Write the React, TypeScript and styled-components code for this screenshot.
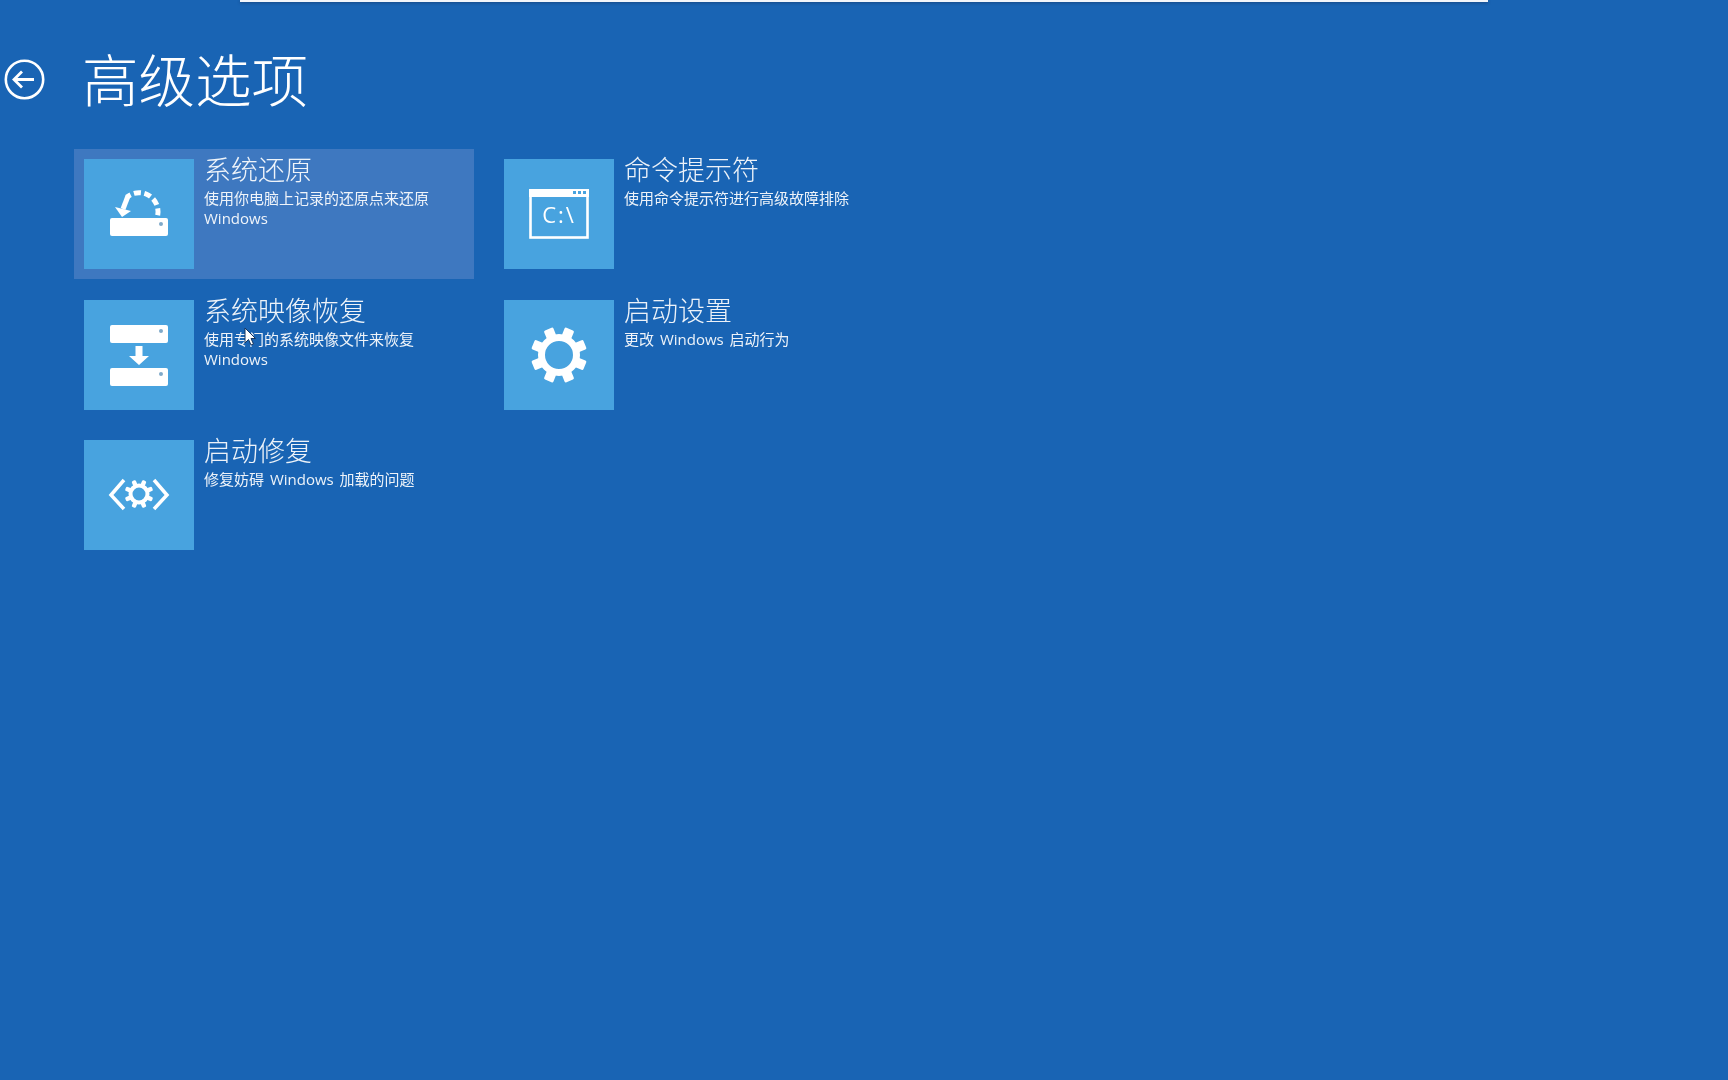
import React from 'react'
import styled, { createGlobalStyle } from 'styled-components'

const GlobalStyle = createGlobalStyle`
  html, body {
    margin: 0;
    height: 100%;
    background: #1964b4;
  }
  #root {
    height: 100%;
  }
`

// the reference is a video frame, everything is a bit soft
const Page = styled.div`
  position: relative;
  display: flex;
  flex-direction: column;
  height: 1080px;
  overflow: hidden;
  background: #1964b4;
  color: #fff;
  font-family: 'Noto Sans', 'Noto Sans CJK SC', sans-serif;
  filter: blur(0.45px);
`

const TopStrip = styled.div`
  flex: none;
  width: 1248px;
  height: 2px;
  margin: 0 auto;
  background: #f2f5fa;
  box-shadow: 0 1px 3px rgba(20, 40, 80, 0.55);
`

const Header = styled.header`
  display: flex;
  align-items: center;
  gap: 37px;
  height: 80px;
  margin-top: 35px;
  padding-left: 4px;
`

const BackIcon = styled.svg`
  flex: none;
  width: 41px;
  height: 41px;
  margin-top: 4px;
`

const Title = styled.h1`
  margin: 0;
  font-family: 'Noto Sans CJK SC', sans-serif;
  font-size: 56.5px;
  font-weight: 300;
  line-height: 80px;
`

const OptionGrid = styled.main`
  display: grid;
  grid-auto-flow: column;
  grid-template-rows: repeat(3, 130px);
  grid-template-columns: repeat(2, 400px);
  gap: 10.5px 20px;
  margin: 32px 0 0 74px;
`

const Option = styled.div<{ $active?: boolean }>`
  display: flex;
  gap: 10px;
  padding: 10px;
  background: ${(p) => (p.$active ? '#3e78c0' : 'transparent')};
`

const Tile = styled.div`
  flex: none;
  width: 110px;
  height: 110px;
  background: #48a3df;
`

const TileIcon = styled.svg`
  display: block;
  width: 110px;
  height: 110px;
`

const OptionText = styled.div`
  min-width: 0;
  margin-top: -10px;
  opacity: 0.92;
`

const OptionTitle = styled.div`
  font-family: 'Noto Sans CJK SC', sans-serif;
  font-size: 27px;
  font-weight: 300;
  line-height: 40px;
`

const OptionDesc = styled.div`
  width: 240px;
  margin-top: -1px;
  font-family: 'Open Sans', 'Noto Sans CJK SC', sans-serif;
  font-size: 15px;
  line-height: 20px;
  word-spacing: 2px;
`

const Cursor = styled.svg`
  position: absolute;
  left: 244px;
  top: 327px;
  width: 12px;
  height: 19px;
`

const Drive = ({ y }: { y: number }) => (
  <>
    <rect x="26" y={y} width="58" height="18" rx="2" fill="#fff" />
    <circle cx="77" cy={y + 6} r="2" fill="#7fa9c9" />
  </>
)

// eight toothed gear, teeth are thick dashes on a ring
const Gear = ({ cx, cy, ring, hole, outer, tooth }: { cx: number; cy: number; ring: number; hole: number; outer: number; tooth: number }) => (
  <g>
    <circle cx={cx} cy={cy} r={(ring + hole) / 2} fill="none" stroke="#fff" strokeWidth={ring - hole} />
    {[22.5, 67.5, 112.5, 157.5, 202.5, 247.5, 292.5, 337.5].map((a) => (
      <rect
        key={a}
        x={cx - tooth / 2}
        y={cy - outer}
        width={tooth}
        height={outer - ring + 2}
        rx="1.5"
        fill="#fff"
        transform={`rotate(${a} ${cx} ${cy})`}
      />
    ))}
  </g>
)

const RestoreIcon = () => (
  <TileIcon viewBox="0 0 110 110">
    <path d="M73.7 56.3 A19 19 0 0 0 43 38" fill="none" stroke="#fff" strokeWidth="5" strokeDasharray="7 3.5" />
    <path d="M44 37 L39 50" fill="none" stroke="#fff" strokeWidth="5" />
    <path d="M31 48 L47 52 L38 58 Z" fill="#fff" />
    <Drive y={59} />
  </TileIcon>
)

const ImageIcon = () => (
  <TileIcon viewBox="0 0 110 110">
    <Drive y={25} />
    <path d="M51.5 46 H58.5 V56 H65 L55 65 L45 56 H51.5 Z" fill="#fff" />
    <Drive y={68} />
  </TileIcon>
)

const RepairIcon = () => (
  <TileIcon viewBox="0 0 110 110">
    <path d="M40 40 L27 55 L40 69 M70 40 L83 55 L70 69" fill="none" stroke="#fff" strokeWidth="3.5" />
    <Gear cx={55} cy={54} ring={10.5} hole={6.5} outer={14.5} tooth={4.5} />
  </TileIcon>
)

const CommandIcon = () => (
  <TileIcon viewBox="0 0 110 110">
    <rect x="26.5" y="31.5" width="57" height="47" fill="none" stroke="#fff" strokeWidth="2.6" />
    <rect x="25" y="30" width="60" height="8" fill="#fff" />
    <rect x="69" y="32" width="3" height="3" fill="#48a3df" />
    <rect x="74" y="32" width="3" height="3" fill="#48a3df" />
    <rect x="79" y="32" width="3" height="3" fill="#48a3df" />
    <text x="55" y="64" textAnchor="middle" fill="#fff" fontFamily="'Open Sans', sans-serif" fontWeight="400" fontSize="22" letterSpacing="2">
      C:\
    </text>
  </TileIcon>
)

const SettingsIcon = () => (
  <TileIcon viewBox="0 0 110 110">
    <Gear cx={55} cy={55} ring={21} hole={14} outer={28} tooth={10} />
  </TileIcon>
)

const options = [
  { title: '系统还原', desc: '使用你电脑上记录的还原点来还原 Windows', icon: <RestoreIcon />, active: true },
  { title: '系统映像恢复', desc: '使用专门的系统映像文件来恢复 Windows', icon: <ImageIcon /> },
  { title: '启动修复', desc: '修复妨碍 Windows 加载的问题', icon: <RepairIcon /> },
  { title: '命令提示符', desc: '使用命令提示符进行高级故障排除', icon: <CommandIcon /> },
  { title: '启动设置', desc: '更改 Windows 启动行为', icon: <SettingsIcon /> },
]

export default function App() {
  return (
    <Page>
      <GlobalStyle />
      <TopStrip />
      <Header>
        <BackIcon viewBox="0 0 41 41">
          <circle cx="20.5" cy="20.5" r="18.7" fill="none" stroke="#fff" strokeWidth="2.6" />
          <path d="M30 20.5 H10 M18 12.5 L10 20.5 L18 28.5" fill="none" stroke="#fff" strokeWidth="2.8" />
        </BackIcon>
        <Title>高级选项</Title>
      </Header>
      <OptionGrid>
        {options.map((o) => (
          <Option key={o.title} $active={o.active}>
            <Tile>{o.icon}</Tile>
            <OptionText>
              <OptionTitle>{o.title}</OptionTitle>
              <OptionDesc>{o.desc}</OptionDesc>
            </OptionText>
          </Option>
        ))}
      </OptionGrid>
      <Cursor viewBox="0 0 12 19">
        <path d="M1 1 V16 L4.5 12.5 L7 18 L9.5 17 L7 11.5 H11.5 Z" fill="#fff" stroke="#16365f" strokeWidth="1" />
      </Cursor>
    </Page>
  )
}
